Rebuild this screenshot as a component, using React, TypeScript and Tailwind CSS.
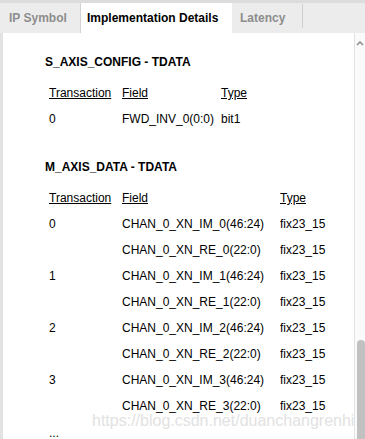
const s1Rows = [{ t: '0', f: 'FWD_INV_0(0:0)', ty: 'bit1' }];

const s2Rows = [
  { t: '0', f: 'CHAN_0_XN_IM_0(46:24)', ty: 'fix23_15' },
  { t: '', f: 'CHAN_0_XN_RE_0(22:0)', ty: 'fix23_15' },
  { t: '1', f: 'CHAN_0_XN_IM_1(46:24)', ty: 'fix23_15' },
  { t: '', f: 'CHAN_0_XN_RE_1(22:0)', ty: 'fix23_15' },
  { t: '2', f: 'CHAN_0_XN_IM_2(46:24)', ty: 'fix23_15' },
  { t: '', f: 'CHAN_0_XN_RE_2(22:0)', ty: 'fix23_15' },
  { t: '3', f: 'CHAN_0_XN_IM_3(46:24)', ty: 'fix23_15' },
  { t: '', f: 'CHAN_0_XN_RE_3(22:0)', ty: 'fix23_15' },
];

function Section({ title, rows, typeCol }: { title: string; rows: { t: string; f: string; ty: string }[]; typeCol: string }) {
  return (
    <div>
      <div className="h-[16px] leading-[16px] text-[12px] font-bold text-black">{title}</div>
      <div className="mt-[10px] pl-[4px]">
        <div className="flex h-[26px] items-center text-[12px] text-black">
          <span className="w-[73px] underline">Transaction</span>
          <span className={`${typeCol} underline`}>Field</span>
          <span className="underline">Type</span>
        </div>
        {rows.map((r, i) => (
          <div key={i} className="flex h-[26px] items-center text-[12px] text-black">
            <span className="w-[73px]">{r.t}</span>
            <span className={typeCol}>{r.f}</span>
            <span>{r.ty}</span>
          </div>
        ))}
      </div>
    </div>
  );
}

export default function App() {
  return (
    <div className="w-[365px] h-[439px] overflow-hidden flex flex-col bg-white font-['Liberation_Sans',Arial,sans-serif]">
      {/* Tabs */}
      <div className="h-[3px] bg-[#dcdcdc]" />
      <div className="h-[30px] flex bg-[#ececec] text-[12px] font-bold">
        <div className="w-[80px] flex items-center pl-[9px] text-[#8c8c8c]">IP Symbol</div>
        <div className="w-px bg-[#d4d4d4]" />
        <div className="w-[151px] flex items-center pl-[6px] bg-white text-black">Implementation Details</div>
        <div className="w-[70px] flex items-center pl-[8px] text-[#8c8c8c]">Latency</div>
        <div className="w-px h-[24px] mt-[1px] bg-[#cfcfcf]" />
      </div>

      {/* Content */}
      <div className="flex-1 flex min-h-0">
        <div className="w-[3px] bg-[#e2e2e2]" />
        <div className="relative flex-1 overflow-hidden pl-[42px] pt-[21px]">
          <Section title="S_AXIS_CONFIG - TDATA" rows={s1Rows} typeCol="w-[99px]" />
          <div className="mt-[27px]">
            <Section title="M_AXIS_DATA - TDATA" rows={s2Rows} typeCol="w-[158px]" />
          </div>
          <div className="pl-[4px] h-[20px] leading-[28px] text-[12px] text-black">...</div>
          {/* watermark */}
          <div className="absolute left-[89px] top-[378px] text-[16px] leading-[20px] text-[#e2e2e2] whitespace-nowrap">
            https://blog.csdn.net/duanchangrenhit
          </div>
        </div>
        <div className="w-px bg-[#e3e3e3]" />
        <div className="w-[10px] flex flex-col bg-[#fafafa]">
          <div className="h-[18px] flex items-center justify-center pt-[2px]">
            <svg width="8" height="5" viewBox="0 0 8 5">
              <path d="M1 4 L4 1 L7 4" fill="none" stroke="#8a8a8a" strokeWidth="1.5" />
            </svg>
          </div>
          <div className="flex-1" />
          <div className="h-[99px] ml-[2px] w-[8px] bg-[#c1c1c1] rounded-t-[4px]" />
        </div>
      </div>
    </div>
  );
}
